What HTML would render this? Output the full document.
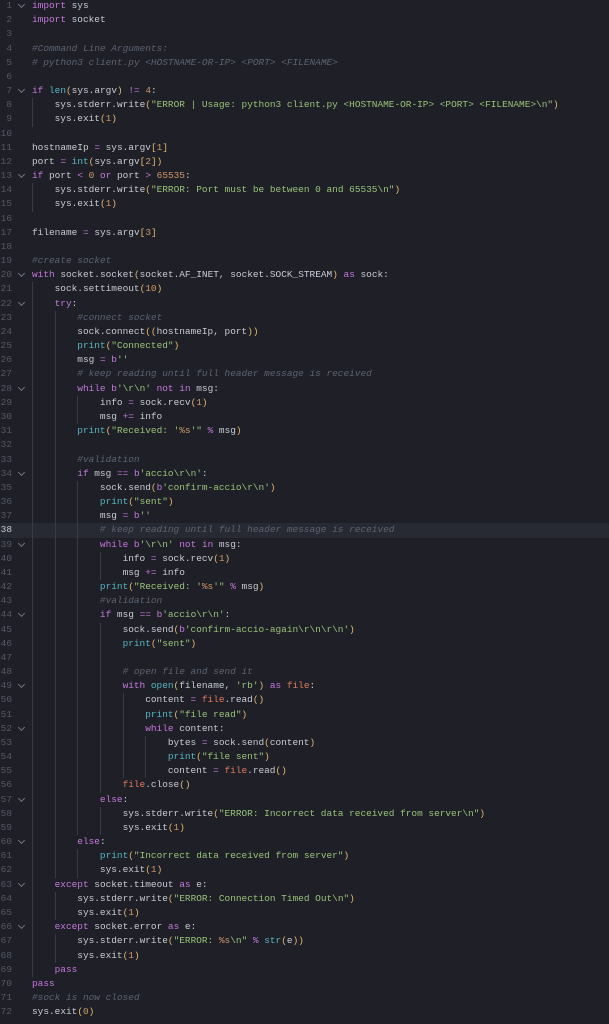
<!DOCTYPE html>
<html><head><meta charset="utf-8"><style>
html,body{margin:0;padding:0;background:#1e1f27;width:609px;height:1024px;overflow:hidden}
#c{position:absolute;top:-1px;left:0;width:609px;font-family:"Liberation Mono",monospace;font-size:9.45px;color:#c9ccd3}
.l{position:relative;height:14.18px;line-height:14.18px;padding-left:32px;white-space:pre}
.l.h{background:#282a33}
.ln{position:absolute;left:0;width:12px;text-align:right;color:#555a66}
.h .ln{color:#c9ccd3}
.fd{position:absolute;left:18px;top:5px;width:7px;height:4px;background:none}
.fd::before{content:"";position:absolute;left:1px;top:-2px;width:4px;height:4px;border-right:1px solid #70757f;border-bottom:1px solid #70757f;transform:rotate(45deg)}
.fd{font-size:0;color:transparent}
i{display:inline-block;width:4ch;border-left:1px solid #383b46;box-sizing:border-box;height:14.18px;vertical-align:top;font-style:normal}
.k{color:#c678dd}.f{color:#56b6c2}.s{color:#98c379}.n{color:#d19a66}.c{color:#5c6370;font-style:italic}.p{color:#e2b86b}.o{color:#c678dd}.v{color:#e07a5f}
</style></head><body><div id="c">
<div class="l"><span class="ln">1</span><span class="fd">∨</span><span class="k">import</span> sys</div>
<div class="l"><span class="ln">2</span><span class="k">import</span> socket</div>
<div class="l"><span class="ln">3</span></div>
<div class="l"><span class="ln">4</span><span class="c">#Command Line Arguments:</span></div>
<div class="l"><span class="ln">5</span><span class="c"># python3 client.py &lt;HOSTNAME-OR-IP&gt; &lt;PORT&gt; &lt;FILENAME&gt;</span></div>
<div class="l"><span class="ln">6</span></div>
<div class="l"><span class="ln">7</span><span class="fd">∨</span><span class="k">if</span> <span class="f">len</span><span class="p">(</span>sys.argv<span class="p">)</span> <span class="o">!=</span> <span class="n">4</span>:</div>
<div class="l"><span class="ln">8</span><i></i>sys.stderr.write<span class="p">(</span><span class="s">"ERROR | Usage: python3 client.py &lt;HOSTNAME-OR-IP&gt; &lt;PORT&gt; &lt;FILENAME&gt;\n"</span><span class="p">)</span></div>
<div class="l"><span class="ln">9</span><i></i>sys.exit<span class="p">(</span><span class="n">1</span><span class="p">)</span></div>
<div class="l"><span class="ln">10</span></div>
<div class="l"><span class="ln">11</span>hostnameIp <span class="o">=</span> sys.argv<span class="p">[</span><span class="n">1</span><span class="p">]</span></div>
<div class="l"><span class="ln">12</span>port <span class="o">=</span> <span class="f">int</span><span class="p">(</span>sys.argv<span class="p">[</span><span class="n">2</span><span class="p">])</span></div>
<div class="l"><span class="ln">13</span><span class="fd">∨</span><span class="k">if</span> port <span class="o">&lt;</span> <span class="n">0</span> <span class="k">or</span> port <span class="o">&gt;</span> <span class="n">65535</span>:</div>
<div class="l"><span class="ln">14</span><i></i>sys.stderr.write<span class="p">(</span><span class="s">"ERROR: Port must be between 0 and 65535\n"</span><span class="p">)</span></div>
<div class="l"><span class="ln">15</span><i></i>sys.exit<span class="p">(</span><span class="n">1</span><span class="p">)</span></div>
<div class="l"><span class="ln">16</span></div>
<div class="l"><span class="ln">17</span>filename <span class="o">=</span> sys.argv<span class="p">[</span><span class="n">3</span><span class="p">]</span></div>
<div class="l"><span class="ln">18</span></div>
<div class="l"><span class="ln">19</span><span class="c">#create socket</span></div>
<div class="l"><span class="ln">20</span><span class="fd">∨</span><span class="k">with</span> socket.socket<span class="p">(</span>socket.AF_INET, socket.SOCK_STREAM<span class="p">)</span> <span class="k">as</span> sock:</div>
<div class="l"><span class="ln">21</span><i></i>sock.settimeout<span class="p">(</span><span class="n">10</span><span class="p">)</span></div>
<div class="l"><span class="ln">22</span><span class="fd">∨</span><i></i><span class="k">try</span>:</div>
<div class="l"><span class="ln">23</span><i></i><i></i><span class="c">#connect socket</span></div>
<div class="l"><span class="ln">24</span><i></i><i></i>sock.connect<span class="p">((</span>hostnameIp, port<span class="p">))</span></div>
<div class="l"><span class="ln">25</span><i></i><i></i><span class="f">print</span><span class="p">(</span><span class="s">"Connected"</span><span class="p">)</span></div>
<div class="l"><span class="ln">26</span><i></i><i></i>msg <span class="o">=</span> <span class="k">b</span><span class="s">''</span></div>
<div class="l"><span class="ln">27</span><i></i><i></i><span class="c"># keep reading until full header message is received</span></div>
<div class="l"><span class="ln">28</span><span class="fd">∨</span><i></i><i></i><span class="k">while</span> <span class="k">b</span><span class="s">'\r\n'</span> <span class="k">not in</span> msg:</div>
<div class="l"><span class="ln">29</span><i></i><i></i><i></i>info <span class="o">=</span> sock.recv<span class="p">(</span><span class="n">1</span><span class="p">)</span></div>
<div class="l"><span class="ln">30</span><i></i><i></i><i></i>msg <span class="o">+=</span> info</div>
<div class="l"><span class="ln">31</span><i></i><i></i><span class="f">print</span><span class="p">(</span><span class="s">"Received: '<span class="n">%s</span>'"</span> <span class="o">%</span> msg<span class="p">)</span></div>
<div class="l"><span class="ln">32</span><i></i><i></i></div>
<div class="l"><span class="ln">33</span><i></i><i></i><span class="c">#validation</span></div>
<div class="l"><span class="ln">34</span><span class="fd">∨</span><i></i><i></i><span class="k">if</span> msg <span class="o">==</span> <span class="k">b</span><span class="s">'accio\r\n'</span>:</div>
<div class="l"><span class="ln">35</span><i></i><i></i><i></i>sock.send<span class="p">(</span><span class="k">b</span><span class="s">'confirm-accio\r\n'</span><span class="p">)</span></div>
<div class="l"><span class="ln">36</span><i></i><i></i><i></i><span class="f">print</span><span class="p">(</span><span class="s">"sent"</span><span class="p">)</span></div>
<div class="l"><span class="ln">37</span><i></i><i></i><i></i>msg <span class="o">=</span> <span class="k">b</span><span class="s">''</span></div>
<div class="l h"><span class="ln">38</span><i></i><i></i><i></i><span class="c"># keep reading until full header message is received</span></div>
<div class="l"><span class="ln">39</span><span class="fd">∨</span><i></i><i></i><i></i><span class="k">while</span> <span class="k">b</span><span class="s">'\r\n'</span> <span class="k">not in</span> msg:</div>
<div class="l"><span class="ln">40</span><i></i><i></i><i></i><i></i>info <span class="o">=</span> sock.recv<span class="p">(</span><span class="n">1</span><span class="p">)</span></div>
<div class="l"><span class="ln">41</span><i></i><i></i><i></i><i></i>msg <span class="o">+=</span> info</div>
<div class="l"><span class="ln">42</span><i></i><i></i><i></i><span class="f">print</span><span class="p">(</span><span class="s">"Received: '<span class="n">%s</span>'"</span> <span class="o">%</span> msg<span class="p">)</span></div>
<div class="l"><span class="ln">43</span><i></i><i></i><i></i><span class="c">#validation</span></div>
<div class="l"><span class="ln">44</span><span class="fd">∨</span><i></i><i></i><i></i><span class="k">if</span> msg <span class="o">==</span> <span class="k">b</span><span class="s">'accio\r\n'</span>:</div>
<div class="l"><span class="ln">45</span><i></i><i></i><i></i><i></i>sock.send<span class="p">(</span><span class="k">b</span><span class="s">'confirm-accio-again\r\n\r\n'</span><span class="p">)</span></div>
<div class="l"><span class="ln">46</span><i></i><i></i><i></i><i></i><span class="f">print</span><span class="p">(</span><span class="s">"sent"</span><span class="p">)</span></div>
<div class="l"><span class="ln">47</span><i></i><i></i><i></i><i></i></div>
<div class="l"><span class="ln">48</span><i></i><i></i><i></i><i></i><span class="c"># open file and send it</span></div>
<div class="l"><span class="ln">49</span><span class="fd">∨</span><i></i><i></i><i></i><i></i><span class="k">with</span> <span class="f">open</span><span class="p">(</span>filename, <span class="s">'rb'</span><span class="p">)</span> <span class="k">as</span> <span class="v">file</span>:</div>
<div class="l"><span class="ln">50</span><i></i><i></i><i></i><i></i><i></i>content <span class="o">=</span> <span class="v">file</span>.read<span class="p">()</span></div>
<div class="l"><span class="ln">51</span><i></i><i></i><i></i><i></i><i></i><span class="f">print</span><span class="p">(</span><span class="s">"file read"</span><span class="p">)</span></div>
<div class="l"><span class="ln">52</span><span class="fd">∨</span><i></i><i></i><i></i><i></i><i></i><span class="k">while</span> content:</div>
<div class="l"><span class="ln">53</span><i></i><i></i><i></i><i></i><i></i><i></i>bytes <span class="o">=</span> sock.send<span class="p">(</span>content<span class="p">)</span></div>
<div class="l"><span class="ln">54</span><i></i><i></i><i></i><i></i><i></i><i></i><span class="f">print</span><span class="p">(</span><span class="s">"file sent"</span><span class="p">)</span></div>
<div class="l"><span class="ln">55</span><i></i><i></i><i></i><i></i><i></i><i></i>content <span class="o">=</span> <span class="v">file</span>.read<span class="p">()</span></div>
<div class="l"><span class="ln">56</span><i></i><i></i><i></i><i></i><span class="v">file</span>.close<span class="p">()</span></div>
<div class="l"><span class="ln">57</span><span class="fd">∨</span><i></i><i></i><i></i><span class="k">else</span>:</div>
<div class="l"><span class="ln">58</span><i></i><i></i><i></i><i></i>sys.stderr.write<span class="p">(</span><span class="s">"ERROR: Incorrect data received from server\n"</span><span class="p">)</span></div>
<div class="l"><span class="ln">59</span><i></i><i></i><i></i><i></i>sys.exit<span class="p">(</span><span class="n">1</span><span class="p">)</span></div>
<div class="l"><span class="ln">60</span><span class="fd">∨</span><i></i><i></i><span class="k">else</span>:</div>
<div class="l"><span class="ln">61</span><i></i><i></i><i></i><span class="f">print</span><span class="p">(</span><span class="s">"Incorrect data received from server"</span><span class="p">)</span></div>
<div class="l"><span class="ln">62</span><i></i><i></i><i></i>sys.exit<span class="p">(</span><span class="n">1</span><span class="p">)</span></div>
<div class="l"><span class="ln">63</span><span class="fd">∨</span><i></i><span class="k">except</span> socket.timeout <span class="k">as</span> e:</div>
<div class="l"><span class="ln">64</span><i></i><i></i>sys.stderr.write<span class="p">(</span><span class="s">"ERROR: Connection Timed Out\n"</span><span class="p">)</span></div>
<div class="l"><span class="ln">65</span><i></i><i></i>sys.exit<span class="p">(</span><span class="n">1</span><span class="p">)</span></div>
<div class="l"><span class="ln">66</span><span class="fd">∨</span><i></i><span class="k">except</span> socket.error <span class="k">as</span> e:</div>
<div class="l"><span class="ln">67</span><i></i><i></i>sys.stderr.write<span class="p">(</span><span class="s">"ERROR: <span class="n">%s</span>\n"</span> <span class="o">%</span> <span class="f">str</span><span class="p">(</span>e<span class="p">))</span></div>
<div class="l"><span class="ln">68</span><i></i><i></i>sys.exit<span class="p">(</span><span class="n">1</span><span class="p">)</span></div>
<div class="l"><span class="ln">69</span><i></i><span class="k">pass</span></div>
<div class="l"><span class="ln">70</span><span class="k">pass</span></div>
<div class="l"><span class="ln">71</span><span class="c">#sock is now closed</span></div>
<div class="l"><span class="ln">72</span>sys.exit<span class="p">(</span><span class="n">0</span><span class="p">)</span></div>
</div></body></html>
